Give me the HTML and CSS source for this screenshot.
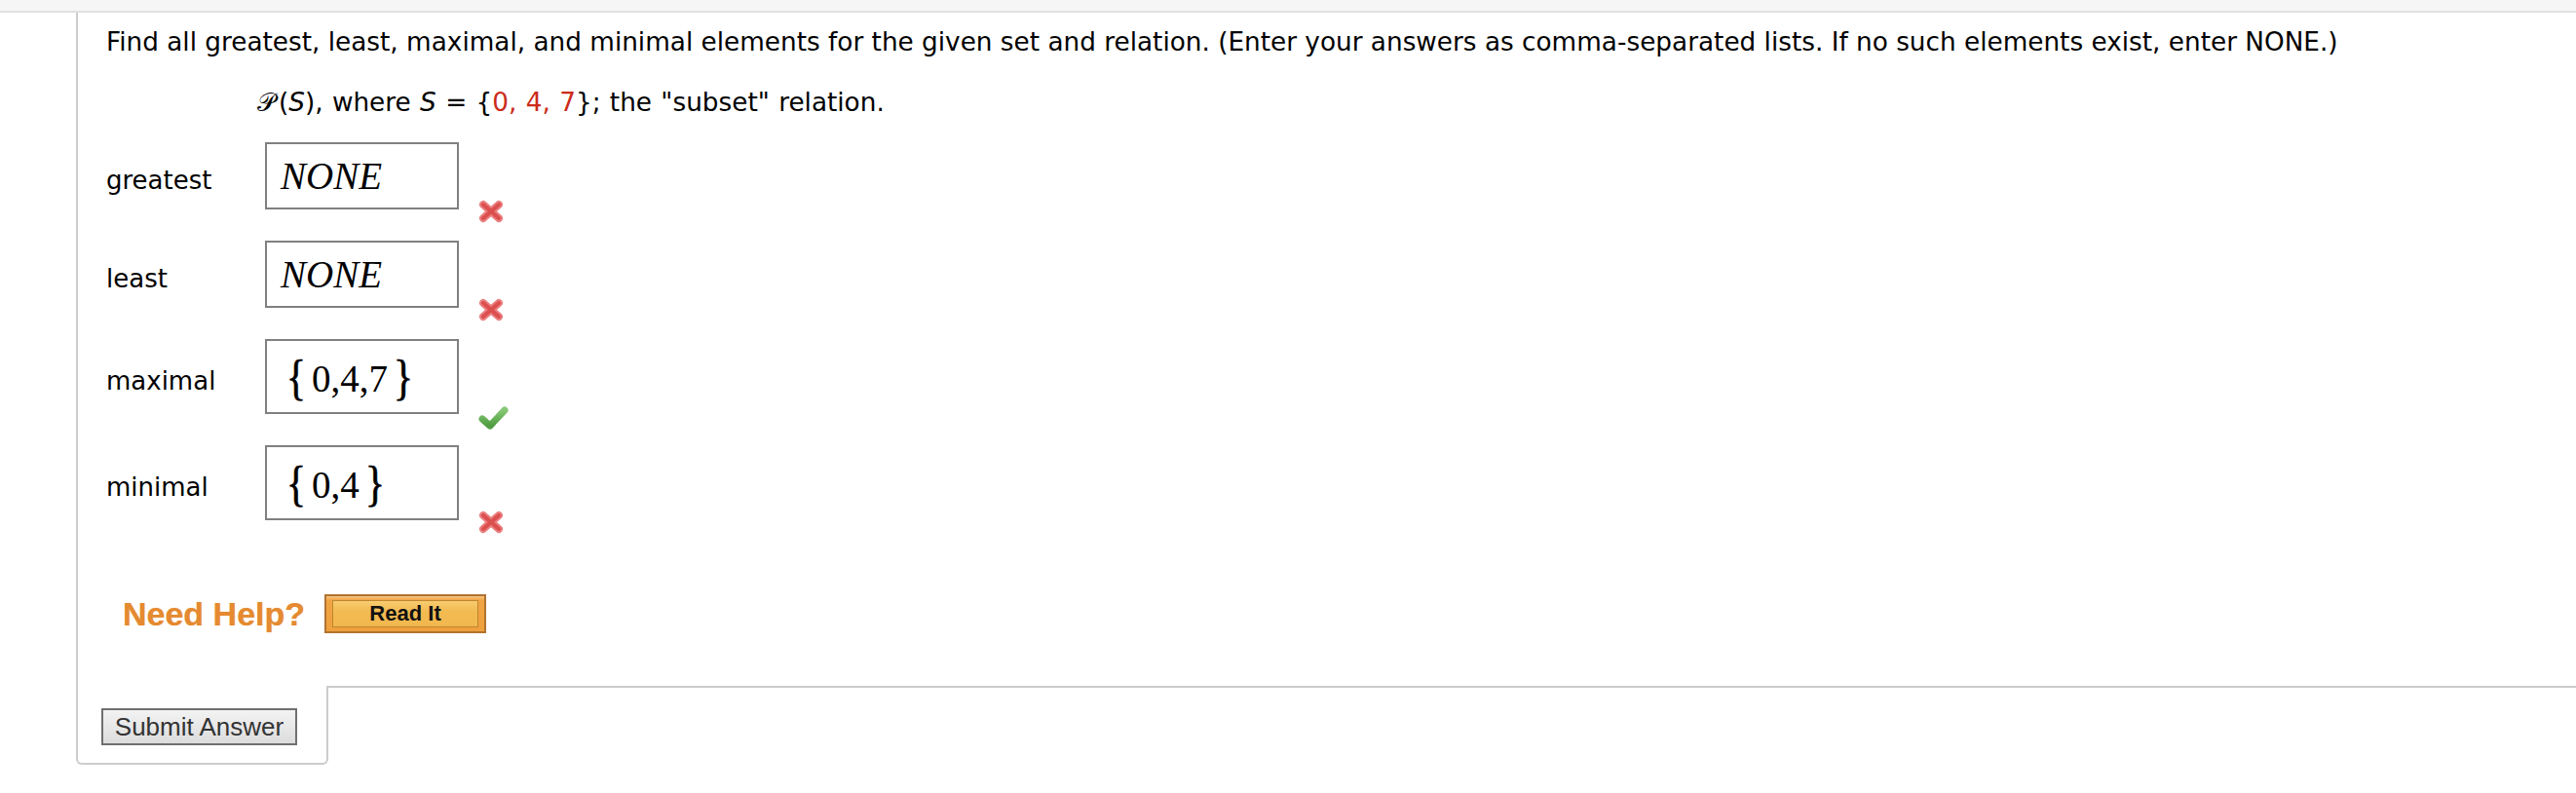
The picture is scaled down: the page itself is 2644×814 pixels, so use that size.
FILE: index.html
```html
<!DOCTYPE html>
<html lang="en">
<head>
<meta charset="utf-8">
<title>Question</title>
<link rel="stylesheet" href="styles.css">
</head>
<body>
<div class="topbar"></div>
<div class="question">
  <p class="prompt">Find all greatest, least, maximal, and minimal elements for the given set and relation. (Enter your answers as comma-separated lists. If no such elements exist, enter NONE.)</p>
  <p class="setline"><span class="script">𝒫</span>(<i class="var">S</i>), where <i class="var">S</i> = {<span class="red">0, 4, 7</span>}; the "subset" relation.</p>
  <div class="rows">
    <div class="row">
      <span class="label">greatest</span>
      <span class="answer"><i class="math">NONE</i></span>
      <svg class="mark mark-x" viewBox="0 0 26 24" width="26" height="24"><g stroke-linecap="round"><line x1="5" y1="5" x2="21" y2="19" stroke="#ea7f7f" stroke-width="8"/><line x1="21" y1="5" x2="5" y2="19" stroke="#ea7f7f" stroke-width="8"/><line x1="5" y1="5" x2="21" y2="19" stroke="#dc4f4f" stroke-width="4"/><line x1="21" y1="5" x2="5" y2="19" stroke="#dc4f4f" stroke-width="4"/></g></svg>
    </div>
    <div class="row">
      <span class="label">least</span>
      <span class="answer"><i class="math">NONE</i></span>
      <svg class="mark mark-x" viewBox="0 0 26 24" width="26" height="24"><g stroke-linecap="round"><line x1="5" y1="5" x2="21" y2="19" stroke="#ea7f7f" stroke-width="8"/><line x1="21" y1="5" x2="5" y2="19" stroke="#ea7f7f" stroke-width="8"/><line x1="5" y1="5" x2="21" y2="19" stroke="#dc4f4f" stroke-width="4"/><line x1="21" y1="5" x2="5" y2="19" stroke="#dc4f4f" stroke-width="4"/></g></svg>
    </div>
    <div class="row">
      <span class="label">maximal</span>
      <span class="answer tall"><span class="brace">{</span><span class="math-n">0,4,7</span><span class="brace">}</span></span>
      <svg class="mark mark-check" viewBox="0 0 31 25" width="31" height="25"><defs><linearGradient id="gc" x1="0" y1="0" x2="0" y2="1"><stop offset="0" stop-color="#86c774"/><stop offset="1" stop-color="#4f9d40"/></linearGradient></defs><path d="M4 14 L12 21 L27 5" fill="none" stroke="url(#gc)" stroke-width="7" stroke-linecap="round" stroke-linejoin="round"/></svg>
    </div>
    <div class="row">
      <span class="label">minimal</span>
      <span class="answer tall"><span class="brace">{</span><span class="math-n">0,4</span><span class="brace">}</span></span>
      <svg class="mark mark-x" viewBox="0 0 26 24" width="26" height="24"><g stroke-linecap="round"><line x1="5" y1="5" x2="21" y2="19" stroke="#ea7f7f" stroke-width="8"/><line x1="21" y1="5" x2="5" y2="19" stroke="#ea7f7f" stroke-width="8"/><line x1="5" y1="5" x2="21" y2="19" stroke="#dc4f4f" stroke-width="4"/><line x1="21" y1="5" x2="5" y2="19" stroke="#dc4f4f" stroke-width="4"/></g></svg>
    </div>
  </div>
  <div class="help">
    <span class="need">Need Help?</span>
    <button class="readit" type="button"><span class="readit-inner">Read It</span></button>
  </div>
</div>
<div class="footer">
  <div class="tab"><button class="submit" type="button">Submit Answer</button></div>
  <div class="rest"></div>
</div>
</body>
</html>
```
FILE: styles.css
```css
html, body {
  margin: 0;
  padding: 0;
  background: #fff;
}
body {
  font-family: "DejaVu Sans", Verdana, sans-serif;
  color: #000;
}
.topbar {
  height: 11px;
  background: #f6f6f6;
  border-bottom: 2px solid #e0e0e0;
}
.question {
  margin-left: 78px;
  border-left: 2px solid #cccccc;
  padding: 12px 0 54px 29px;
}
.prompt {
  margin: 0;
  font-size: 26.3px;
  line-height: 36px;
  white-space: nowrap;
}
.setline {
  margin: 26px 0 0 155px;
  font-size: 26.3px;
  line-height: 36px;
  white-space: nowrap;
  word-spacing: 1px;
}
.script {
  font-family: "DejaVu Sans", sans-serif;
  font-style: normal;
  margin-right: 3px;
}
.var {
  font-style: italic;
}
.red {
  color: #cc2a1a;
}
.rows {
  margin-top: 23px;
  display: flex;
  flex-direction: column;
  gap: 32px;
}
.row {
  display: flex;
  align-items: center;
}
.label {
  width: 163px;
  font-size: 26px;
  line-height: 36px;
  padding-top: 8px;
}
.answer {
  box-sizing: border-box;
  width: 199px;
  height: 69px;
  border: 2px solid #808080;
  display: flex;
  align-items: center;
  padding-left: 14px;
  font-family: "Liberation Serif", "Times New Roman", serif;
}
.answer.tall {
  height: 77px;
  padding-left: 18px;
}
.math {
  font-size: 39px;
  line-height: 1;
  font-style: italic;
}
.math-n {
  font-size: 39px;
  line-height: 1;
  margin: 4px 4px 0 4px;
}
.brace {
  font-size: 50px;
  line-height: 1;
  transform: scaleX(0.85);
  display: inline-block;
  -webkit-text-stroke: 0.6px #000;
}
.mark {
  align-self: flex-end;
  margin-left: 20px;
  margin-bottom: -14px;
}
.mark-check {
  margin-bottom: -16px;
}
.help {
  margin-top: 76px;
  padding-left: 17px;
  display: flex;
  align-items: center;
}
.need {
  font-family: "Liberation Sans", Arial, sans-serif;
  font-weight: bold;
  font-size: 34px;
  color: #e58a30;
  text-shadow: 0 0 1px rgba(229, 138, 48, 0.6);
}
.readit {
  margin-left: 20px;
  box-sizing: border-box;
  width: 166px;
  height: 40px;
  padding: 4px 6px;
  border: 2px solid #b0732f;
  background: linear-gradient(#f6c783 0, #f0a544 4px, #eea03c 100%);
  display: flex;
  align-items: stretch;
}
.readit-inner {
  flex: 1;
  display: flex;
  align-items: center;
  justify-content: center;
  border: 1px solid #c0852f;
  background: linear-gradient(#f7cc70, #f2bb52 40%, #f1b84e);
  font-family: "Liberation Sans", Arial, sans-serif;
  font-weight: bold;
  font-size: 22px;
  color: #111;
}
.footer {
  display: flex;
}
.tab {
  box-sizing: border-box;
  margin-left: 78px;
  width: 259px;
  padding: 23px 0 18px 24px;
  border: 2px solid #cccccc;
  border-top: none;
  border-radius: 0 0 6px 6px;
}
.submit {
  display: block;
  box-sizing: border-box;
  width: 201px;
  height: 38px;
  margin: 0;
  padding: 0;
  border: 2px solid #6f6f6f;
  border-radius: 0;
  background: linear-gradient(#f3f3f3, #dcdcdc);
  font-family: "Liberation Sans", Arial, sans-serif;
  font-size: 26px;
  color: #333;
}
.rest {
  flex: 1;
  border-top: 2px solid #cccccc;
}
```
